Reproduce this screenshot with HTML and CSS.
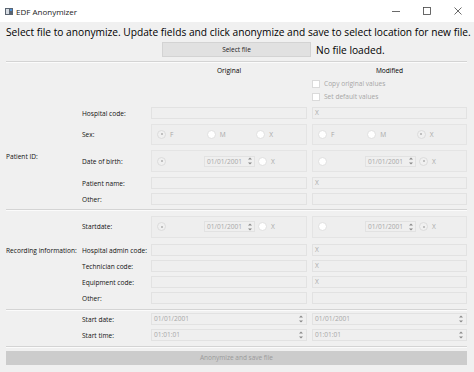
FILE: index.html
```html
<!DOCTYPE html>
<html>
<head>
<meta charset="utf-8">
<link rel="stylesheet" href="styles.css">
</head>
<body>
<div class="win">
  <div class="titlebar">
    <svg class="appicon" width="8" height="7" viewBox="0 0 8 7"><rect x="0" y="0" width="8" height="7" fill="#5a6470"/><rect x="1" y="1" width="3" height="5" fill="#d8dde4"/><rect x="5" y="1" width="2" height="2" fill="#4a90d9"/></svg>
    <span class="title">EDF Anonymizer</span>
    <div class="controls">
      <svg width="10" height="10" viewBox="0 0 10 10"><line x1="1" y1="5.5" x2="9" y2="5.5" stroke="#444" stroke-width="0.8"/></svg>
      <svg width="10" height="10" viewBox="0 0 10 10"><rect x="1.5" y="1.5" width="7" height="7" fill="none" stroke="#444" stroke-width="0.8"/></svg>
      <svg width="10" height="10" viewBox="0 0 10 10"><path d="M1.5 1.5 L8.5 8.5 M8.5 1.5 L1.5 8.5" stroke="#444" stroke-width="0.8"/></svg>
    </div>
  </div>
  <div class="content">
    <div class="headline">Select file to anonymize. Update fields and click anonymize and save to select location for new file.</div>
    <div class="selrow">
      <div class="btn">Select file</div>
      <span class="status">No file loaded.</span>
    </div>
    <div class="sep sep-first"></div>

    <div class="grid top">
      <div class="colhead c-orig">Original</div>
      <div class="colhead c-mod">Modified</div>
      <div class="check c-mod cb1"><span class="box"></span><span>Copy original values</span></div>
      <div class="check c-mod cb2"><span class="box"></span><span>Set default values</span></div>
    </div>

    <div class="grid patient">
      <div class="seclabel patient-label">Patient ID:</div>
      <div class="lbl r1">Hospital code:</div>
      <div class="field c-orig r1"></div>
      <div class="field c-mod r1">X</div>

      <div class="lbl r2">Sex:</div>
      <div class="group sgroup c-orig r2">
        <span class="opt"><span class="radio on"></span>F</span>
        <span class="opt"><span class="radio"></span>M</span>
        <span class="opt"><span class="radio"></span>X</span>
      </div>
      <div class="group sgroup c-mod r2">
        <span class="opt"><span class="radio"></span>F</span>
        <span class="opt"><span class="radio"></span>M</span>
        <span class="opt"><span class="radio on"></span>X</span>
      </div>

      <div class="lbl r3">Date of birth:</div>
      <div class="group dgroup c-orig r3">
        <span class="radio lead on"></span>
        <span class="date">01/01/2001<span class="spin"></span></span>
        <span class="opt"><span class="radio"></span>X</span>
      </div>
      <div class="group dgroup c-mod r3">
        <span class="radio lead"></span>
        <span class="date">01/01/2001<span class="spin"></span></span>
        <span class="opt"><span class="radio on"></span>X</span>
      </div>

      <div class="lbl r4">Patient name:</div>
      <div class="field c-orig r4"></div>
      <div class="field c-mod r4">X</div>

      <div class="lbl r5">Other:</div>
      <div class="field c-orig r5"></div>
      <div class="field c-mod r5"></div>
    </div>
    <div class="sep"></div>

    <div class="grid recording">
      <div class="lbl r1">Startdate:</div>
      <div class="group dgroup c-orig r1">
        <span class="radio lead on"></span>
        <span class="date">01/01/2001<span class="spin"></span></span>
        <span class="opt"><span class="radio"></span>X</span>
      </div>
      <div class="group dgroup c-mod r1">
        <span class="radio lead"></span>
        <span class="date">01/01/2001<span class="spin"></span></span>
        <span class="opt"><span class="radio on"></span>X</span>
      </div>

      <div class="seclabel rec-label">Recording information:</div>
      <div class="lbl r2">Hospital admin code:</div>
      <div class="field c-orig r2"></div>
      <div class="field c-mod r2">X</div>

      <div class="lbl r3">Technician code:</div>
      <div class="field c-orig r3"></div>
      <div class="field c-mod r3">X</div>

      <div class="lbl r4">Equipment code:</div>
      <div class="field c-orig r4"></div>
      <div class="field c-mod r4">X</div>

      <div class="lbl r5">Other:</div>
      <div class="field c-orig r5"></div>
      <div class="field c-mod r5"></div>
    </div>
    <div class="sep"></div>

    <div class="grid times">
      <div class="lbl r1">Start date:</div>
      <div class="field spinfield c-orig r1">01/01/2001<span class="spin"></span></div>
      <div class="field spinfield c-mod r1">01/01/2001<span class="spin"></span></div>
      <div class="lbl r2">Start time:</div>
      <div class="field spinfield c-orig r2">01:01:01<span class="spin"></span></div>
      <div class="field spinfield c-mod r2">01:01:01<span class="spin"></span></div>
    </div>
    <div class="sep"></div>

    <div class="anon">Anonymize and save file</div>
  </div>
</div>
</body>
</html>
```

FILE: styles.css
```css
html, body { margin: 0; padding: 0; }
body { background: #f0f0f0; }

.win {
  width: 474px;
  height: 372px;
  background: #f0f0f0;
  font-family: "Open Sans", "Noto Sans", sans-serif;
  color: #000;
  overflow: hidden;
}

.titlebar {
  height: 22px;
  background: #ffffff;
  display: flex;
  align-items: center;
}
.appicon { margin-left: 5px; margin-right: 3px; }
.title { font-size: 8px; color: #222; }
.controls {
  margin-left: auto;
  display: flex;
  gap: 21px;
  margin-right: 11px;
}
.controls svg { display: block; }

.content { padding: 0 7px 0 6px; }

.headline {
  height: 20px;
  line-height: 20px;
  font-size: 10.2px;
  white-space: nowrap;
  color: #000;
}

.selrow {
  height: 15px;
  display: flex;
  align-items: center;
}
.btn {
  margin-left: 156px;
  width: 147px;
  height: 13px;
  background: #e1e1e1;
  border: 1px solid #d3d3d3;
  font-size: 6.5px;
  line-height: 13px;
  text-align: center;
  color: #222;
}
.status {
  margin-left: 5px;
  font-size: 10.2px;
}

.sep {
  height: 0;
  border-top: 1px solid #d4d4d4;
  border-bottom: 1px solid #fbfbfb;
}
.sep-first { margin-top: 4px; }

.grid {
  display: grid;
  grid-template-columns: 76px 69px 156px 5px 155px;
  align-items: center;
  font-size: 6.6px;
}
.c-orig { grid-column: 3; }
.c-mod { grid-column: 5; }

.top { grid-template-rows: 14px 13px 13px; }
.colhead { grid-row: 1; text-align: center; }
.check { display: flex; align-items: center; color: #a6a6a6; }
.cb1 { grid-row: 2; }
.cb2 { grid-row: 3; }
.box {
  width: 8px; height: 8px;
  background: #fff;
  border: 1px solid #dadada;
  box-sizing: border-box;
  margin-right: 4px;
}

.patient { grid-template-rows: 20px 22px 32px 12px 20px; }
.recording { grid-template-rows: 31px 16px 16px 16px 16px; margin-bottom: 3px; }
.times { grid-template-rows: 16px 16px; margin-bottom: 3px; }

.r1 { grid-row: 1; }
.r2 { grid-row: 2; }
.r3 { grid-row: 3; }
.r4 { grid-row: 4; }
.r5 { grid-row: 5; }

.lbl { grid-column: 2; color: #111; white-space: nowrap; }
.seclabel { grid-column: 1; white-space: nowrap; color: #111; }
.patient-label { grid-row: 1 / 6; }
.rec-label { grid-row: 2; }

.field {
  height: 12px;
  box-sizing: border-box;
  border: 1px solid #e2e2e2;
  background: #efefef;
  color: #a8a8a8;
  line-height: 10px;
  padding-left: 2px;
  position: relative;
}

.group {
  height: 22px;
  box-sizing: border-box;
  border: 1px solid #e4e4e4;
  background: #eeeeee;
  display: flex;
  align-items: center;
  padding-left: 5px;
  color: #a8a8a8;
}
.sgroup { height: 21px; }
.opt { display: flex; align-items: center; width: 50px; }
.radio {
  width: 9px; height: 9px;
  box-sizing: border-box;
  border-radius: 50%;
  border: 1px solid #e0e0e0;
  background: #fff;
  margin-right: 4px;
  position: relative;
  flex: none;
}
.radio.on { background: #f0f0f0; border-color: #dcdcdc; }
.radio.on::after {
  content: "";
  position: absolute;
  left: 2.5px; top: 2.5px;
  width: 2px; height: 2px;
  border-radius: 50%;
  background: #b0b0b0;
}
.radio.lead { margin-right: 38px; }
.dgroup .opt { margin-left: 3px; }
.date {
  width: 51px;
  height: 11px;
  box-sizing: border-box;
  border: 1px solid #e2e2e2;
  background: #efefef;
  line-height: 9px;
  padding-left: 2px;
  color: #a8a8a8;
  position: relative;
  flex: none;
}
.spin {
  position: absolute;
  right: 2px;
  top: 50%;
  width: 4px;
  height: 7px;
  transform: translateY(-50%);
}
.spin::before, .spin::after {
  content: "";
  position: absolute;
  left: 0;
  border-left: 2px solid transparent;
  border-right: 2px solid transparent;
}
.spin::before { top: 0; border-bottom: 2.5px solid #888; }
.spin::after { bottom: 0; border-top: 2.5px solid #888; }
.spinfield .spin { right: 3px; }

.anon {
  margin-top: 3px;
  height: 14px;
  background: #cccccc;
  color: #9a9a9a;
  font-size: 6.5px;
  line-height: 14px;
  text-align: center;
}
```
